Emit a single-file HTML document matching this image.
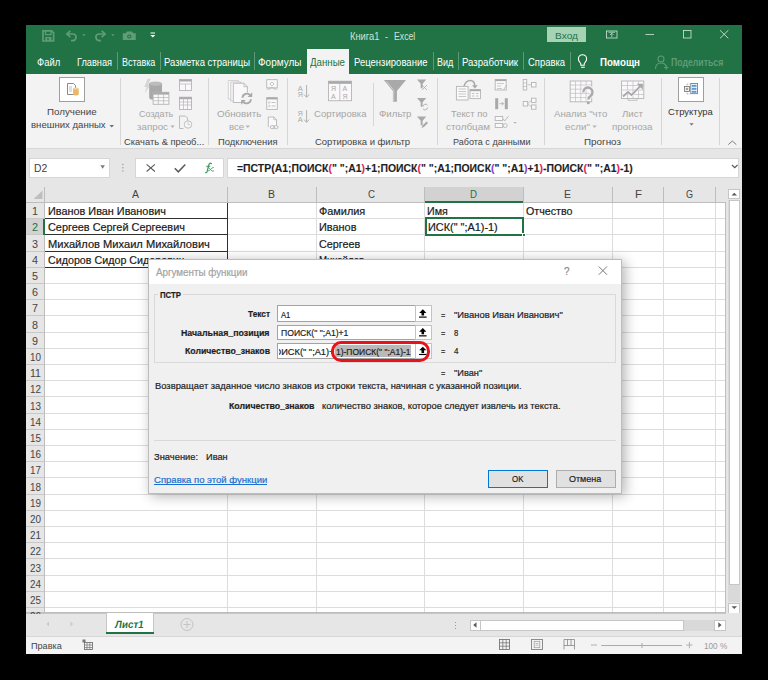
<!DOCTYPE html>
<html><head><meta charset="utf-8"><style>
html,body{margin:0;padding:0;background:#000;width:768px;height:680px;overflow:hidden}
.a{position:absolute;box-sizing:border-box}
.t{position:absolute;white-space:pre;transform-origin:0 0;font-family:"Liberation Sans",sans-serif}
svg{position:absolute;overflow:visible}
</style></head><body>
<div class="a" style="left:26px;top:25px;width:716px;height:629px;background:#e6e6e6;"></div>
<div class="a" style="left:26px;top:25px;width:716px;height:48.5px;background:#217346;"></div>
<div class="a" style="left:547px;top:27px;width:38.5px;height:15px;background:#a7d3b5;"></div>
<svg style="left:0;top:0" width="768" height="680"><rect x="606.5" y="31" width="10.5" height="7" fill="none" stroke="#d5e7db" stroke-width="0.8"/><path d="M611.75 37v-3.5M610 35l1.75-1.75 1.75 1.75M608.5 32.3h6.5" fill="none" stroke="#d5e7db" stroke-width="0.7"/><path d="M645.5 34.5h8.5" stroke="#d5e7db" stroke-width="0.8"/><rect x="683.5" y="30.5" width="7.5" height="7.5" fill="none" stroke="#d5e7db" stroke-width="0.8"/><path d="M720 30.3l8.3 8M728.3 30.3l-8.3 8" stroke="#d5e7db" stroke-width="0.85"/></svg>
<svg style="left:0;top:0" width="768" height="680"><path d="M43 30.8h8.6l2 2v8.2H43z" fill="none" stroke="#5f9c77" stroke-width="1.7"/><path d="M45.5 31v3.6h5.5V31" fill="none" stroke="#5f9c77" stroke-width="1.3"/><rect x="45.3" y="37" width="6.2" height="4" fill="#5f9c77"/><rect x="47.2" y="38.3" width="1.6" height="1.8" fill="#217346"/><path d="M67.3 34h5.5a3.3 3.3 0 0 1 0 6.6h-1.8" fill="none" stroke="#5f9c77" stroke-width="1.7"/><path d="M70.3 30.8l-3.4 3.2 3.4 3.2" fill="none" stroke="#5f9c77" stroke-width="1.7"/><path d="M82.3 34.3h3.2l-1.6 1.9z" fill="#5f9c77"/><path d="M104.7 34h-5.5a3.3 3.3 0 0 0 0 6.6h1.8" fill="none" stroke="#5f9c77" stroke-width="1.7"/><path d="M101.7 30.8l3.4 3.2-3.4 3.2" fill="none" stroke="#5f9c77" stroke-width="1.7"/><path d="M111.3 34.3h3.2l-1.6 1.9z" fill="#5f9c77"/><path d="M122.8 33.2h3l1.2-1.8h5l1.2 1.8h2.6v6.8h-13z" fill="#5f9c77"/><circle cx="129.3" cy="36.5" r="2.1" fill="#217346"/><circle cx="129.3" cy="36.5" r="1.1" fill="#5f9c77"/><path d="M150.5 33h4.5" stroke="#ffffff" stroke-width="1"/><path d="M150.3 35h5l-2.5 2.6z" fill="#ffffff"/></svg>
<div class="a" style="left:307px;top:49px;width:42px;height:24.5px;background:#f3f3f3;"></div>
<div class="a" style="left:117.3px;top:52px;width:1px;height:18px;background:#5c9a74;"></div>
<div class="a" style="left:160px;top:52px;width:1px;height:18px;background:#5c9a74;"></div>
<div class="a" style="left:253.75px;top:52px;width:1px;height:18px;background:#5c9a74;"></div>
<div class="a" style="left:432.5px;top:52px;width:1px;height:18px;background:#5c9a74;"></div>
<div class="a" style="left:457.5px;top:52px;width:1px;height:18px;background:#5c9a74;"></div>
<div class="a" style="left:523px;top:52px;width:1px;height:18px;background:#5c9a74;"></div>
<div class="a" style="left:569.5px;top:52px;width:1px;height:18px;background:#5c9a74;"></div>
<svg style="left:0;top:0" width="768" height="680"><path d="M581 67.3h3.8M580.8 65.2v-1.3c0-1-2.4-2.4-2.4-5a4.1 4.1 0 0 1 8.2 0c0 2.6-2.4 4-2.4 5v1.3z" fill="none" stroke="#fff" stroke-width="1.1"/><circle cx="661" cy="59" r="3" fill="none" stroke="#5e9c76" stroke-width="1.1"/><path d="M655.5 69c0-4 2.5-6 5.5-6s4.5 1.5 5 3M664 67.5h4.5M666.25 65.25v4.5" fill="none" stroke="#5e9c76" stroke-width="1.1"/></svg>
<div class="a" style="left:26px;top:73.5px;width:716px;height:74.5px;background:#f3f3f3;"></div>
<div class="a" style="left:26px;top:147.5px;width:716px;height:1px;background:#d6d6d6;"></div>
<div class="a" style="left:119.9px;top:77.5px;width:1px;height:67px;background:#d6d6d6;"></div>
<div class="a" style="left:207.9px;top:77.5px;width:1px;height:67px;background:#d6d6d6;"></div>
<div class="a" style="left:286.9px;top:77.5px;width:1px;height:67px;background:#d6d6d6;"></div>
<div class="a" style="left:436.9px;top:77.5px;width:1px;height:67px;background:#d6d6d6;"></div>
<div class="a" style="left:543.9px;top:77.5px;width:1px;height:67px;background:#d6d6d6;"></div>
<div class="a" style="left:661.15px;top:77.5px;width:1px;height:67px;background:#d6d6d6;"></div>
<div class="a" style="left:719.4px;top:77.5px;width:1px;height:67px;background:#d6d6d6;"></div>
<div class="a" style="left:372.5px;top:82.5px;width:1px;height:43.5px;background:#d6d6d6;"></div>
<div class="a" style="left:58.75px;top:77px;width:26.25px;height:25px;background:#ffffff;border:1px solid #9f9f9f;box-sizing:border-box;"></div>
<div class="a" style="left:678px;top:77px;width:25.75px;height:24.75px;background:#ffffff;border:1px solid #9f9f9f;box-sizing:border-box;"></div>
<div class="a" style="left:28.75px;top:157.5px;width:81.5px;height:20px;background:#ffffff;border:1px solid #d6d6d6;box-sizing:border-box;"></div>
<div class="a" style="left:135.3px;top:157.7px;width:88.6px;height:20px;background:#ffffff;border:1px solid #d6d6d6;box-sizing:border-box;"></div>
<div class="a" style="left:227px;top:157.5px;width:511.5px;height:20px;background:#ffffff;border:1px solid #d6d6d6;box-sizing:border-box;"></div>
<svg style="left:0;top:0" width="768" height="680"><path d="M100.4 165.3h4.5l-2.25 3.5z" fill="#7a7a7a"/><circle cx="122.9" cy="164.5" r="0.7" fill="#9a9a9a"/><circle cx="122.9" cy="167.75" r="0.7" fill="#9a9a9a"/><circle cx="122.9" cy="171" r="0.7" fill="#9a9a9a"/><path d="M146.6 164.3l8.3 7.2M154.9 164.3l-8.3 7.2" stroke="#5a5a5a" stroke-width="1.1"/><path d="M174.8 168.3l3.5 3.5 7-7.4" fill="none" stroke="#5a5a5a" stroke-width="1.5"/><path d="M732 165l2.75 2.75 2.75-2.75" fill="none" stroke="#5a5a5a" stroke-width="1.2"/></svg>
<svg style="left:0;top:0" width="768" height="680"><path d="M211.5 163.6q-1.2-1-2.2.2-.6.8-1.2 3.6l-1 4.2q-.4 1.4-1.6 1.1" fill="none" stroke="#3c9a62" stroke-width="1.2" stroke-linecap="round"/><path d="M206.6 166.3h3.3M208.3 167.6q1 .3 2 1.6l1.5 1.6q.6.5 1.6.2M213.2 167.5q-.8 0-1.6.9l-1.6 1.6q-.5.7-1.4.7" fill="none" stroke="#3c9a62" stroke-width="1" stroke-linecap="round"/></svg>
<div class="a" style="left:44.5px;top:202.5px;width:681.0px;height:410.5px;background:#ffffff;"></div>
<div class="a" style="left:45px;top:218.2px;width:680.5px;height:1px;background:#dcdcdc;"></div>
<div class="a" style="left:26px;top:218.2px;width:18.5px;height:1px;background:#c8c8c8;"></div>
<div class="a" style="left:45px;top:234.4px;width:680.5px;height:1px;background:#dcdcdc;"></div>
<div class="a" style="left:26px;top:234.4px;width:18.5px;height:1px;background:#c8c8c8;"></div>
<div class="a" style="left:45px;top:250.6px;width:680.5px;height:1px;background:#dcdcdc;"></div>
<div class="a" style="left:26px;top:250.6px;width:18.5px;height:1px;background:#c8c8c8;"></div>
<div class="a" style="left:45px;top:266.8px;width:680.5px;height:1px;background:#dcdcdc;"></div>
<div class="a" style="left:26px;top:266.8px;width:18.5px;height:1px;background:#c8c8c8;"></div>
<div class="a" style="left:45px;top:283.0px;width:680.5px;height:1px;background:#dcdcdc;"></div>
<div class="a" style="left:26px;top:283.0px;width:18.5px;height:1px;background:#c8c8c8;"></div>
<div class="a" style="left:45px;top:299.2px;width:680.5px;height:1px;background:#dcdcdc;"></div>
<div class="a" style="left:26px;top:299.2px;width:18.5px;height:1px;background:#c8c8c8;"></div>
<div class="a" style="left:45px;top:315.4px;width:680.5px;height:1px;background:#dcdcdc;"></div>
<div class="a" style="left:26px;top:315.4px;width:18.5px;height:1px;background:#c8c8c8;"></div>
<div class="a" style="left:45px;top:331.6px;width:680.5px;height:1px;background:#dcdcdc;"></div>
<div class="a" style="left:26px;top:331.6px;width:18.5px;height:1px;background:#c8c8c8;"></div>
<div class="a" style="left:45px;top:347.79999999999995px;width:680.5px;height:1px;background:#dcdcdc;"></div>
<div class="a" style="left:26px;top:347.79999999999995px;width:18.5px;height:1px;background:#c8c8c8;"></div>
<div class="a" style="left:45px;top:364.0px;width:680.5px;height:1px;background:#dcdcdc;"></div>
<div class="a" style="left:26px;top:364.0px;width:18.5px;height:1px;background:#c8c8c8;"></div>
<div class="a" style="left:45px;top:380.2px;width:680.5px;height:1px;background:#dcdcdc;"></div>
<div class="a" style="left:26px;top:380.2px;width:18.5px;height:1px;background:#c8c8c8;"></div>
<div class="a" style="left:45px;top:396.4px;width:680.5px;height:1px;background:#dcdcdc;"></div>
<div class="a" style="left:26px;top:396.4px;width:18.5px;height:1px;background:#c8c8c8;"></div>
<div class="a" style="left:45px;top:412.6px;width:680.5px;height:1px;background:#dcdcdc;"></div>
<div class="a" style="left:26px;top:412.6px;width:18.5px;height:1px;background:#c8c8c8;"></div>
<div class="a" style="left:45px;top:428.79999999999995px;width:680.5px;height:1px;background:#dcdcdc;"></div>
<div class="a" style="left:26px;top:428.79999999999995px;width:18.5px;height:1px;background:#c8c8c8;"></div>
<div class="a" style="left:45px;top:445.0px;width:680.5px;height:1px;background:#dcdcdc;"></div>
<div class="a" style="left:26px;top:445.0px;width:18.5px;height:1px;background:#c8c8c8;"></div>
<div class="a" style="left:45px;top:461.2px;width:680.5px;height:1px;background:#dcdcdc;"></div>
<div class="a" style="left:26px;top:461.2px;width:18.5px;height:1px;background:#c8c8c8;"></div>
<div class="a" style="left:45px;top:477.4px;width:680.5px;height:1px;background:#dcdcdc;"></div>
<div class="a" style="left:26px;top:477.4px;width:18.5px;height:1px;background:#c8c8c8;"></div>
<div class="a" style="left:45px;top:493.59999999999997px;width:680.5px;height:1px;background:#dcdcdc;"></div>
<div class="a" style="left:26px;top:493.59999999999997px;width:18.5px;height:1px;background:#c8c8c8;"></div>
<div class="a" style="left:45px;top:509.8px;width:680.5px;height:1px;background:#dcdcdc;"></div>
<div class="a" style="left:26px;top:509.8px;width:18.5px;height:1px;background:#c8c8c8;"></div>
<div class="a" style="left:45px;top:526.0px;width:680.5px;height:1px;background:#dcdcdc;"></div>
<div class="a" style="left:26px;top:526.0px;width:18.5px;height:1px;background:#c8c8c8;"></div>
<div class="a" style="left:45px;top:542.2px;width:680.5px;height:1px;background:#dcdcdc;"></div>
<div class="a" style="left:26px;top:542.2px;width:18.5px;height:1px;background:#c8c8c8;"></div>
<div class="a" style="left:45px;top:558.4px;width:680.5px;height:1px;background:#dcdcdc;"></div>
<div class="a" style="left:26px;top:558.4px;width:18.5px;height:1px;background:#c8c8c8;"></div>
<div class="a" style="left:45px;top:574.5999999999999px;width:680.5px;height:1px;background:#dcdcdc;"></div>
<div class="a" style="left:26px;top:574.5999999999999px;width:18.5px;height:1px;background:#c8c8c8;"></div>
<div class="a" style="left:45px;top:590.8px;width:680.5px;height:1px;background:#dcdcdc;"></div>
<div class="a" style="left:26px;top:590.8px;width:18.5px;height:1px;background:#c8c8c8;"></div>
<div class="a" style="left:45px;top:607.0px;width:680.5px;height:1px;background:#dcdcdc;"></div>
<div class="a" style="left:26px;top:607.0px;width:18.5px;height:1px;background:#c8c8c8;"></div>
<div class="a" style="left:227.0px;top:202.5px;width:1px;height:410.5px;background:#dcdcdc;"></div>
<div class="a" style="left:227.0px;top:186.5px;width:1px;height:16px;background:#bdbdbd;"></div>
<div class="a" style="left:315.75px;top:202.5px;width:1px;height:410.5px;background:#dcdcdc;"></div>
<div class="a" style="left:315.75px;top:186.5px;width:1px;height:16px;background:#bdbdbd;"></div>
<div class="a" style="left:424.0px;top:202.5px;width:1px;height:410.5px;background:#dcdcdc;"></div>
<div class="a" style="left:424.0px;top:186.5px;width:1px;height:16px;background:#bdbdbd;"></div>
<div class="a" style="left:522.5px;top:202.5px;width:1px;height:410.5px;background:#dcdcdc;"></div>
<div class="a" style="left:522.5px;top:186.5px;width:1px;height:16px;background:#bdbdbd;"></div>
<div class="a" style="left:612.0px;top:202.5px;width:1px;height:410.5px;background:#dcdcdc;"></div>
<div class="a" style="left:612.0px;top:186.5px;width:1px;height:16px;background:#bdbdbd;"></div>
<div class="a" style="left:663.25px;top:202.5px;width:1px;height:410.5px;background:#dcdcdc;"></div>
<div class="a" style="left:663.25px;top:186.5px;width:1px;height:16px;background:#bdbdbd;"></div>
<div class="a" style="left:715.0px;top:202.5px;width:1px;height:410.5px;background:#dcdcdc;"></div>
<div class="a" style="left:715.0px;top:186.5px;width:1px;height:16px;background:#bdbdbd;"></div>
<div class="a" style="left:26px;top:201.5px;width:699.5px;height:1px;background:#bdbdbd;"></div>
<div class="a" style="left:44px;top:186.5px;width:1px;height:426.5px;background:#bdbdbd;"></div>
<div class="a" style="left:724.5px;top:202.5px;width:1px;height:410.5px;background:#bdbdbd;"></div>
<div class="a" style="left:26px;top:612px;width:699.5px;height:1px;background:#bdbdbd;"></div>
<div class="a" style="left:425px;top:186.5px;width:98px;height:15px;background:#d2d2d2;"></div>
<div class="a" style="left:425px;top:200.5px;width:98px;height:2px;background:#217346;"></div>
<div class="a" style="left:26px;top:218.7px;width:18px;height:15.7px;background:#d2d2d2;"></div>
<div class="a" style="left:43px;top:218.7px;width:2px;height:16.2px;background:#217346;"></div>
<svg style="left:0;top:0" width="768" height="680"><path d="M42.5 190.5v8.5h-9z" fill="#bfbfbf"/></svg>
<div class="a" style="left:44.5px;top:218.2px;width:183.5px;height:1px;background:#303030;"></div>
<div class="a" style="left:44.5px;top:234.4px;width:183.5px;height:1px;background:#303030;"></div>
<div class="a" style="left:44.5px;top:250.6px;width:183.5px;height:1px;background:#303030;"></div>
<div class="a" style="left:44.5px;top:266.8px;width:183.5px;height:1px;background:#303030;"></div>
<div class="a" style="left:227px;top:202.5px;width:1px;height:64.8px;background:#303030;"></div>
<div class="a" style="left:424.5px;top:217px;width:99.5px;height:18.5px;border:2px solid #217346;box-sizing:border-box;"></div>
<div class="a" style="left:521.5px;top:233px;width:4px;height:4px;background:#217346;border:1px solid #fff;"></div>
<div class="a" style="left:725.5px;top:186.5px;width:16.5px;height:427px;background:#e6e6e6;"></div>
<div class="a" style="left:728.3px;top:188.6px;width:11.8px;height:10.7px;background:#ffffff;border:1px solid #c6c6c6;box-sizing:border-box;"></div>
<div class="a" style="left:728.3px;top:200.3px;width:11.8px;height:402px;background:#d9d9d9;"></div>
<div class="a" style="left:728.8px;top:200.3px;width:11.3px;height:384.7px;background:#ffffff;border:1px solid #c6c6c6;box-sizing:border-box;"></div>
<div class="a" style="left:728.3px;top:602.5px;width:11.8px;height:11px;background:#ffffff;border:1px solid #c6c6c6;box-sizing:border-box;"></div>
<svg style="left:0;top:0" width="768" height="680"><path d="M731.5 195.5h5.5l-2.75-2.8z" fill="#595959"/><path d="M731.5 606.3h5.5l-2.75 2.8z" fill="#595959"/></svg>
<div class="a" style="left:26px;top:613px;width:716px;height:23.25px;background:#e6e6e6;"></div>
<div class="a" style="left:26px;top:613px;width:700px;height:1px;background:#c6c6c6;"></div>
<div class="a" style="left:105.5px;top:613px;width:48.25px;height:21px;background:#ffffff;border-left:1px solid #c6c6c6;border-right:1px solid #c6c6c6;"></div>
<div class="a" style="left:105.5px;top:631.5px;width:48.25px;height:2px;background:#217346;"></div>
<div class="a" style="left:455.25px;top:621.5px;width:1px;height:1.2px;background:#9a9a9a;"></div>
<div class="a" style="left:455.25px;top:624.5px;width:1px;height:1.2px;background:#9a9a9a;"></div>
<div class="a" style="left:455.25px;top:627.5px;width:1px;height:1.2px;background:#9a9a9a;"></div>
<div class="a" style="left:469.5px;top:619.5px;width:256px;height:11.75px;background:#d9d9d9;"></div>
<div class="a" style="left:469.5px;top:619.5px;width:214.75px;height:11.75px;background:#ffffff;border:1px solid #c6c6c6;box-sizing:border-box;"></div>
<div class="a" style="left:469.5px;top:619.5px;width:11.5px;height:11.75px;background:#ffffff;border:1px solid #c6c6c6;box-sizing:border-box;"></div>
<div class="a" style="left:713.75px;top:619.5px;width:11.75px;height:11.75px;background:#ffffff;border:1px solid #c6c6c6;box-sizing:border-box;"></div>
<svg style="left:0;top:0" width="768" height="680"><path d="M49 621.5l-2.5 2.5 2.5 2.5z" fill="#c8c8c8"/><path d="M70.5 621.5l2.5 2.5-2.5 2.5z" fill="#c8c8c8"/><circle cx="187" cy="624.5" r="6" fill="none" stroke="#c4c4c4" stroke-width="1"/><path d="M183.5 624.5h7M187 621v7" stroke="#c4c4c4" stroke-width="1"/><path d="M476.5 622.3v5.4l-3.3-2.7z" fill="#595959"/><path d="M718.3 622.3v5.4l3.3-2.7z" fill="#595959"/></svg>
<div class="a" style="left:26px;top:636.25px;width:716px;height:17.75px;background:#f3f3f3;"></div>
<div class="a" style="left:26px;top:636.25px;width:716px;height:1px;background:#d6d6d6;"></div>
<svg style="left:0;top:0" width="768" height="680"><rect x="82.5" y="639.5" width="3" height="3" fill="#777"/><rect x="84.5" y="642.5" width="8" height="7" fill="none" stroke="#777" stroke-width="0.9"/><path d="M84.5 645h8M84.5 647.5h8M87 642.5v7M89.8 642.5v7" stroke="#777" stroke-width="0.7"/><rect x="499.5" y="639.5" width="10" height="10" fill="none" stroke="#777" stroke-width="0.9"/><path d="M499.5 642.8h10M499.5 646.2h10M502.8 639.5v10M506.2 639.5v10" stroke="#777" stroke-width="0.8"/><rect x="531.5" y="639.5" width="11" height="10" fill="none" stroke="#808080" stroke-width="0.9"/><rect x="534.2" y="641.3" width="5.6" height="6.4" fill="none" stroke="#9a9a9a" stroke-width="0.7"/><path d="M535.5 643.5h3M535.5 645.2h3" stroke="#9a9a9a" stroke-width="0.6"/><path d="M564 649.5v-10h10.5v10M564 645.5h10.5M567.5 639.5v6M571 639.5v6" fill="none" stroke="#808080" stroke-width="0.75"/><path d="M591 645h6" stroke="#b0b0b0" stroke-width="1"/><path d="M601.25 645.5h80.75" stroke="#aaa" stroke-width="1"/><path d="M642 643v5" stroke="#aaa" stroke-width="1"/><path d="M686.25 645h6.25M689.4 642v6.25" stroke="#b0b0b0" stroke-width="1"/></svg>
<div class="a" style="left:148px;top:258.8px;width:473.5px;height:235.2px;background:#f0f0f0;border:1px solid #bcbcbc;box-shadow:3px 2px 12px rgba(0,0,0,0.3);z-index:20"></div>
<div class="a" style="left:149px;top:259.8px;width:471.5px;height:24px;background:#ffffff;z-index:20;"></div>
<svg style="left:0;top:0;z-index:21" width="768" height="680"><path d="M598.75 266.5l8.25 8.25M607 266.5l-8.25 8.25" stroke="#7a7a7a" stroke-width="1"/></svg>
<div class="a" style="left:154.4px;top:294px;width:461.5px;height:69px;border:1px solid #d9d9d9;box-sizing:border-box;z-index:20;"></div>
<div class="a" style="left:158px;top:290px;width:25px;height:8px;background:#f0f0f0;z-index:20;"></div>
<div class="a" style="left:277.25px;top:305.4px;width:154.5px;height:16.200000000000045px;background:#ffffff;border:1px solid #a3a3a3;box-sizing:border-box;z-index:20;"></div>
<div class="a" style="left:415px;top:305.4px;width:16.75px;height:16.200000000000045px;background:#ffffff;border:1.5px solid #c3c3c3;box-sizing:border-box;z-index:20;"></div>
<svg style="left:0;top:0;z-index:21" width="768" height="680"><path d="M422.8 309.30l-3.6 3.6h2.3v2.6h2.6v-2.6h2.3z" fill="#000"/><path d="M419 317.10h7.6" stroke="#000" stroke-width="1.2"/></svg>
<div class="a" style="left:277.25px;top:324.5px;width:154.5px;height:15.5px;background:#ffffff;border:1px solid #a3a3a3;box-sizing:border-box;z-index:20;"></div>
<div class="a" style="left:415px;top:324.5px;width:16.75px;height:15.5px;background:#ffffff;border:1.5px solid #c3c3c3;box-sizing:border-box;z-index:20;"></div>
<svg style="left:0;top:0;z-index:21" width="768" height="680"><path d="M422.8 328.05l-3.6 3.6h2.3v2.6h2.6v-2.6h2.3z" fill="#000"/><path d="M419 335.85h7.6" stroke="#000" stroke-width="1.2"/></svg>
<div class="a" style="left:277.25px;top:343.25px;width:154.5px;height:15.25px;background:#ffffff;border:1px solid #a3a3a3;box-sizing:border-box;z-index:20;"></div>
<div class="a" style="left:415px;top:343.25px;width:16.75px;height:15.25px;background:#ffffff;border:1.5px solid #c3c3c3;box-sizing:border-box;z-index:20;"></div>
<svg style="left:0;top:0;z-index:21" width="768" height="680"><path d="M422.8 346.68l-3.6 3.6h2.3v2.6h2.6v-2.6h2.3z" fill="#000"/><path d="M419 354.48h7.6" stroke="#000" stroke-width="1.2"/></svg>
<div class="a" style="left:335px;top:345.2px;width:76px;height:11.6px;background:#b9b9b9;z-index:20;"></div>
<div class="a" style="left:331.2px;top:340.8px;width:98.8px;height:20.8px;border:3.6px solid #e8121a;border-radius:10px;z-index:22"></div>
<div class="a" style="left:153.7px;top:439.5px;width:462px;height:1px;background:#d9d9d9;z-index:20;"></div>
<div class="a" style="left:154.2px;top:483.6px;width:113.3px;height:1px;background:#1a6fd0;z-index:20;"></div>
<div class="a" style="left:487.8px;top:470.1px;width:59.9px;height:17.8px;background:#e1e1e1;border:1.6px solid #0078d7;box-sizing:border-box;z-index:20;"></div>
<div class="a" style="left:555.9px;top:470.2px;width:59.9px;height:17.6px;background:#e1e1e1;border:1px solid #adadad;box-sizing:border-box;z-index:20;"></div>
<svg style="left:0;top:0" width="768" height="680"><path d="M67.5 83.5h6l2 2v9h-8z" fill="#fff" stroke="#6d6d6d" stroke-width="0.8"/><path d="M69 87h3M69 89h3M69 91h3" stroke="#b0b0b0" stroke-width="0.8"/><path d="M73.1 88.5v6a2.8 1.1 0 0 0 5.6 0v-6z" fill="#e9b765"/><ellipse cx="75.9" cy="88.5" rx="2.8" ry="1" fill="#f3d39a"/><path d="M147.5 78.7h3.4l-2.6 5.5h2.5l-6 9.4 1.8-6.6h-2.4z" fill="#d6d6d6"/><path d="M149.2 84v14a6.4 2 0 0 0 12.8 0V84z" fill="#a9a9a9"/><ellipse cx="155.6" cy="84" rx="6.4" ry="2" fill="#bdbdbd" stroke="#a9a9a9" stroke-width="0.6"/><rect x="153.1" y="92.3" width="15.8" height="12" fill="#faf8fa" stroke="#b5b5b5" stroke-width="0.9"/><rect x="153.1" y="92.3" width="15.8" height="2.3" fill="#a9a9a9"/><path d="M153.1 97.5h15.8M153.1 100.8h15.8M158.3 94.6v9.7M163.6 94.6v9.7" stroke="#b5b5b5" stroke-width="0.7"/><rect x="179.5" y="79.5" width="12" height="11" fill="#faf8fa" stroke="#b5b5b5" stroke-width="0.9"/><rect x="179.5" y="79.5" width="12" height="2" fill="#a9a9a9"/><path d="M179.5 84h12M185.5 84v6.5" stroke="#b5b5b5" stroke-width="0.7"/><rect x="179.5" y="97.2" width="12" height="12.3" fill="#faf8fa" stroke="#b5b5b5" stroke-width="0.9"/><rect x="179.5" y="97.2" width="12" height="2" fill="#a9a9a9"/><path d="M179.5 102h12M179.5 105h12M183.5 97.2v12.3M187.5 97.2v12.3" stroke="#b5b5b5" stroke-width="0.7"/><path d="M179.5 116h6l2 2v5M183.5 128.5h-4v-12.5" fill="none" stroke="#b5b5b5" stroke-width="0.9"/><circle cx="188" cy="124.5" r="3.7" fill="#faf8fa" stroke="#b5b5b5" stroke-width="0.9"/><path d="M188 122.2v2.5h2" fill="none" stroke="#b5b5b5" stroke-width="0.7"/><path d="M228.3 80.5h10v18.5h-10z" fill="#faf8fa" stroke="#c9c9c9" stroke-width="0.8"/><path d="M230.8 82h10v19h-10z" fill="#faf8fa" stroke="#c3c3c3" stroke-width="0.8"/><path d="M233.3 83.2h10.6l3.5 3.5v15.8h-14.1z" fill="#faf8fa" stroke="#b5b5b5" stroke-width="0.9"/><path d="M243.9 83.2v3.5h3.5" fill="none" stroke="#b5b5b5" stroke-width="0.8"/><circle cx="246.7" cy="98.5" r="6.3" fill="#f3f3f3"/><path d="M242.5 97.8a4.3 4.3 0 0 1 7.6-2.6M250.9 99.2a4.3 4.3 0 0 1-7.6 2.6" fill="none" stroke="#a9a9a9" stroke-width="1.8"/><path d="M252.2 92.3v4.6h-4.6zM241.2 104.7v-4.6h4.6z" fill="#a9a9a9"/><path d="M266.7 79.6h10.6v8.2h-10.6z" fill="#faf8fa" stroke="#b5b5b5" stroke-width="0.9"/><path d="M272 81.9l2.1 2.1-2.1 2.1-2.1-2.1z" fill="none" stroke="#b5b5b5" stroke-width="0.8"/><path d="M266.7 89h3.2l1.2-1.2h1.8l1.2 1.2h3.2" fill="none" stroke="#b5b5b5" stroke-width="0.9"/><rect x="266.7" y="97.6" width="10.6" height="11.8" fill="#faf8fa" stroke="#b5b5b5" stroke-width="0.9"/><rect x="266.7" y="97.6" width="10.6" height="1.8" fill="#a9a9a9"/><circle cx="269.3" cy="102.5" r="0.8" fill="none" stroke="#b5b5b5" stroke-width="0.6"/><circle cx="269.3" cy="106" r="0.8" fill="none" stroke="#b5b5b5" stroke-width="0.6"/><path d="M271.5 102.5h4M271.5 106h4" stroke="#b5b5b5" stroke-width="0.8"/><path d="M268.3 127v-10h5.5l2.7 2.7v5.5" fill="#faf8fa" stroke="#b5b5b5" stroke-width="0.9"/><path d="M273.8 117v2.7h2.7" fill="none" stroke="#b5b5b5" stroke-width="0.7"/><rect x="270.3" y="125.6" width="4.2" height="3" rx="1.5" fill="none" stroke="#b5b5b5" stroke-width="0.9"/><rect x="273.8" y="125.6" width="4.2" height="3" rx="1.5" fill="none" stroke="#b5b5b5" stroke-width="0.9"/><text x="297.8" y="91.2" font-family="Liberation Sans" font-size="7.5" fill="#a9a9a9">A</text><text x="297.8" y="97.4" font-family="Liberation Sans" font-size="7" fill="#a9a9a9">Я</text><path d="M306.6 85v12M304 94.5l2.6 2.8 2.6-2.8" fill="none" stroke="#a9a9a9" stroke-width="0.9"/><text x="297.8" y="116" font-family="Liberation Sans" font-size="7" fill="#a9a9a9">Я</text><text x="297.8" y="122.4" font-family="Liberation Sans" font-size="7.5" fill="#a9a9a9">A</text><path d="M306.6 110v12.3M304 119.5l2.6 2.8 2.6-2.8" fill="none" stroke="#a9a9a9" stroke-width="0.9"/><rect x="328.5" y="81.2" width="23" height="19.5" fill="#faf8fa" stroke="#b5b5b5" stroke-width="0.9"/><rect x="328.5" y="81.2" width="23" height="2.6" fill="#a9a9a9"/><path d="M339.8 83.8v17" stroke="#b5b5b5" stroke-width="0.8"/><text x="331" y="91" font-family="Liberation Sans" font-size="7" fill="#a9a9a9">Я</text><text x="331" y="99" font-family="Liberation Sans" font-size="7" fill="#a9a9a9">A</text><text x="342.5" y="91" font-family="Liberation Sans" font-size="7" fill="#a9a9a9">A</text><text x="342.5" y="99" font-family="Liberation Sans" font-size="7" fill="#a9a9a9">Я</text><path d="M383.9 80.1h22.1l-9.1 10.9v10.7h-4V91z" fill="#a9a9a9"/><path d="M386.5 81.5l7.2 8.8v11" fill="none" stroke="#e0e0e0" stroke-width="0.7"/><path d="M417 79.5h9.3l-3.7 4.2v4.5h-1.9v-4.5z" fill="#a9a9a9"/><path d="M422 85l5 5M427 85l-5 5" stroke="#a9a9a9" stroke-width="0.8"/><path d="M417 98h9.3l-3.7 4.2v4.5h-1.9v-4.5z" fill="#a9a9a9"/><path d="M423 106.5a2.6 2.6 0 0 1 4.5-1.5M427.6 107.5a2.6 2.6 0 0 1-4.5 1.5" fill="none" stroke="#a9a9a9" stroke-width="0.9"/><path d="M417 116.5h9.3l-3.7 4.2v4.5h-1.9v-4.5z" fill="#a9a9a9"/><path d="M421.5 128l1-2.5 4-4 1.5 1.5-4 4z" fill="#a9a9a9"/><path d="M464 86q1.8-5.6 6.3-5.6 4.2 0 4.6 5.5" fill="none" stroke="#a9a9a9" stroke-width="1.5"/><path d="M472 85.3l2.9 3.2 2.9-3.2z" fill="#a9a9a9"/><rect x="456.4" y="86.4" width="11.7" height="13.6" fill="#faf8fa" stroke="#b5b5b5" stroke-width="0.9"/><path d="M458.5 89h7.5M458.5 91.5h7.5M458.5 94h7.5M458.5 96.5h7.5" stroke="#b5b5b5" stroke-width="0.7"/><rect x="470" y="89.6" width="10.5" height="9" fill="#faf8fa" stroke="#b5b5b5" stroke-width="0.9"/><rect x="470" y="89.6" width="10.5" height="1.6" fill="#a9a9a9"/><path d="M472 93.5h2.5M476 93.5h2.5M472 96h2.5M476 96h2.5" stroke="#b5b5b5" stroke-width="0.8"/><rect x="495.2" y="79.5" width="11" height="10.5" fill="#faf8fa" stroke="#b5b5b5" stroke-width="0.9"/><rect x="495.2" y="79.5" width="11" height="1.6" fill="#a9a9a9"/><path d="M497 83.5h7M497 86h4M497 88.5h5" stroke="#b5b5b5" stroke-width="0.7"/><path d="M503.5 90l3-5" stroke="#b5b5b5" stroke-width="0.8"/><rect x="495.2" y="98.2" width="3" height="11" fill="#a9a9a9"/><rect x="504.8" y="98.2" width="3" height="11" fill="#a9a9a9"/><path d="M499.5 103.7h4M502 102l1.5 1.7-1.5 1.7" fill="none" stroke="#a9a9a9" stroke-width="0.8"/><rect x="495.2" y="116.5" width="7.5" height="4" fill="#faf8fa" stroke="#b5b5b5" stroke-width="0.9"/><rect x="495.2" y="123.5" width="7.5" height="4" fill="#faf8fa" stroke="#b5b5b5" stroke-width="0.9"/><path d="M503 119l2 1.8 3.5-4.8" fill="none" stroke="#b5b5b5" stroke-width="0.9"/><circle cx="505.2" cy="125.6" r="2" fill="none" stroke="#b5b5b5" stroke-width="0.8"/><path d="M513.3 122h3.5l-1.75 1.8z" fill="#b5b5b5"/><rect x="523.2" y="79.5" width="3.5" height="10.5" fill="#faf8fa" stroke="#b5b5b5" stroke-width="0.9"/><path d="M523.2 83h3.5M523.2 86.5h3.5M527.5 84.7h3.5" stroke="#b5b5b5" stroke-width="0.7"/><rect x="531.5" y="82.5" width="4.5" height="4.5" fill="#faf8fa" stroke="#b5b5b5" stroke-width="0.9"/><rect x="523.2" y="101.5" width="4.5" height="4.5" fill="#faf8fa" stroke="#b5b5b5" stroke-width="0.9"/><rect x="531.5" y="98.2" width="4.5" height="4.2" fill="#faf8fa" stroke="#b5b5b5" stroke-width="0.9"/><rect x="531.5" y="105" width="4.5" height="4.2" fill="#faf8fa" stroke="#b5b5b5" stroke-width="0.9"/><path d="M527.7 103.7l3.8-3.5M527.7 103.7l3.8 3.5" stroke="#b5b5b5" stroke-width="0.7"/><rect x="570.2" y="81" width="21.5" height="20.8" fill="#faf8fa" stroke="#b5b5b5" stroke-width="0.9"/><path d="M570.2 85h21.5M570.2 89.2h21.5M570.2 93.4h21.5M570.2 97.6h21.5M575.5 81v20.8M580.8 81v20.8M586.1 81v20.8" stroke="#b5b5b5" stroke-width="0.6"/><path d="M583.3 92.3a4.6 4.6 0 1 1 7.2 3.6c-1.6 1-2.2 1.9-2.2 3.6" fill="none" stroke="#f3f3f3" stroke-width="4.4"/><path d="M583.3 92.3a4.6 4.6 0 1 1 7.2 3.6c-1.6 1-2.2 1.9-2.2 3.6" fill="none" stroke="#a9a9a9" stroke-width="2.4"/><circle cx="588.3" cy="102.7" r="1.5" fill="#a9a9a9"/><rect x="621.5" y="81" width="22.3" height="17.5" fill="#faf8fa" stroke="#b5b5b5" stroke-width="0.9"/><path d="M621.5 85.5h22.3M621.5 90h22.3M621.5 94.5h22.3M627.5 81v17.5M633 81v17.5M638.5 81v17.5" stroke="#b5b5b5" stroke-width="0.6"/><path d="M623 96.5l5-4.5 3.5 3 9.5-9.5" fill="none" stroke="#faf8fa" stroke-width="3"/><path d="M623 96.5l5-4.5 3.5 3 9.5-9.5" fill="none" stroke="#a9a9a9" stroke-width="1.8"/><path d="M636.8 83.8h6v6z" fill="#a9a9a9"/><path d="M628 98.5v1.8h9v-1.8" fill="none" stroke="#b5b5b5" stroke-width="0.8"/><rect x="684.5" y="86.5" width="5" height="5" fill="#f2f2f2" stroke="#707070" stroke-width="0.8"/><path d="M685.8 89h2.4M687 87.8v2.4" stroke="#555" stroke-width="0.6"/><path d="M687 84v2.5M687 91.5v2.5M687 84h3M687 94h3" stroke="#909090" stroke-width="0.6" stroke-dasharray="1 0.6"/><rect x="690.8" y="83.5" width="6.7" height="10.2" fill="#fff" stroke="#707070" stroke-width="0.8"/><rect x="691.8" y="84.8" width="4.7" height="2" fill="#5b9bd5"/><rect x="691.8" y="87.8" width="4.7" height="2" fill="#5b9bd5"/><rect x="691.8" y="90.8" width="4.7" height="2" fill="#5b9bd5"/><path d="M689.5 123.2h4.1l-2.05 2.4z" fill="#6d6d6d"/><path d="M728.3 144.6l4-3.6 4 3.6" fill="none" stroke="#6d6d6d" stroke-width="0.9"/><path d="M109.5 125h4.5l-2.25 2.4z" fill="#6d6d6d"/><path d="M170.3 125.5h4.5l-2.25 2.4z" fill="#b5b5b5"/><path d="M245.5 125.5h4.5l-2.25 2.4z" fill="#b5b5b5"/><path d="M592.3 125.5h4.5l-2.25 2.4z" fill="#b5b5b5"/></svg>
<div class="t" style="left:350px;top:30.60px;font-size:10px;line-height:11.17px;color:#cfe2d6;font-weight:400;transform:scaleX(0.9338);">Книга1</div>
<div class="t" style="left:385.4px;top:30.60px;font-size:10px;line-height:11.17px;color:#cfe2d6;font-weight:400;transform:scaleX(0.8673);">-</div>
<div class="t" style="left:394px;top:30.60px;font-size:10px;line-height:11.17px;color:#cfe2d6;font-weight:400;transform:scaleX(0.8690);">Excel</div>
<div class="t" style="left:555px;top:30.80px;font-size:9.5px;line-height:10.61px;color:#217346;font-weight:400;transform:scaleX(1.0698);">Вход</div>
<div class="t" style="left:36.6px;top:56.60px;font-size:10px;line-height:11.17px;color:#ffffff;font-weight:400;transform:scaleX(0.9413);">Файл</div>
<div class="t" style="left:77px;top:56.60px;font-size:10px;line-height:11.17px;color:#ffffff;font-weight:400;transform:scaleX(0.9195);">Главная</div>
<div class="t" style="left:121.9px;top:56.60px;font-size:10px;line-height:11.17px;color:#ffffff;font-weight:400;transform:scaleX(0.8958);">Вставка</div>
<div class="t" style="left:164px;top:56.60px;font-size:10px;line-height:11.17px;color:#ffffff;font-weight:400;transform:scaleX(0.9480);">Разметка страницы</div>
<div class="t" style="left:257.5px;top:56.60px;font-size:10px;line-height:11.17px;color:#ffffff;font-weight:400;transform:scaleX(0.9996);">Формулы</div>
<div class="t" style="left:310px;top:56.60px;font-size:10px;line-height:11.17px;color:#217346;font-weight:400;transform:scaleX(0.9684);">Данные</div>
<div class="t" style="left:354px;top:56.60px;font-size:10px;line-height:11.17px;color:#ffffff;font-weight:400;transform:scaleX(0.9518);">Рецензирование</div>
<div class="t" style="left:436.75px;top:56.60px;font-size:10px;line-height:11.17px;color:#ffffff;font-weight:400;transform:scaleX(0.8981);">Вид</div>
<div class="t" style="left:462px;top:56.60px;font-size:10px;line-height:11.17px;color:#ffffff;font-weight:400;transform:scaleX(0.9601);">Разработчик</div>
<div class="t" style="left:527.5px;top:56.60px;font-size:10px;line-height:11.17px;color:#ffffff;font-weight:400;transform:scaleX(0.9431);">Справка</div>
<div class="t" style="left:599.5px;top:56.60px;font-size:10px;line-height:11.17px;color:#ffffff;font-weight:700;transform:scaleX(0.9752);">Помощн</div>
<div class="t" style="left:670.75px;top:56.60px;font-size:10px;line-height:11.17px;color:#5e9c76;font-weight:700;transform:scaleX(0.8706);">Поделиться</div>
<div class="t" style="left:47.4px;top:107.30px;font-size:9.5px;line-height:10.61px;color:#444444;font-weight:400;transform:scaleX(1.0276);">Получение</div>
<div class="t" style="left:31.1px;top:119.80px;font-size:9.5px;line-height:10.61px;color:#444444;font-weight:400;transform:scaleX(1.0081);">внешних данных</div>
<div class="t" style="left:123.75px;top:137.20px;font-size:9.5px;line-height:10.61px;color:#444444;font-weight:400;transform:scaleX(0.9833);">Скачать &amp; преоб...</div>
<div class="t" style="left:138.75px;top:108.70px;font-size:9.5px;line-height:10.61px;color:#a6a6a6;font-weight:400;transform:scaleX(0.9485);">Создать</div>
<div class="t" style="left:137px;top:121.50px;font-size:9.5px;line-height:10.61px;color:#a6a6a6;font-weight:400;transform:scaleX(1.0296);">запрос</div>
<div class="t" style="left:217px;top:108.70px;font-size:9.5px;line-height:10.61px;color:#a6a6a6;font-weight:400;transform:scaleX(1.0287);">Обновить</div>
<div class="t" style="left:228.75px;top:121.50px;font-size:9.5px;line-height:10.61px;color:#a6a6a6;font-weight:400;transform:scaleX(1.0177);">все</div>
<div class="t" style="left:217.5px;top:137.20px;font-size:9.5px;line-height:10.61px;color:#444444;font-weight:400;transform:scaleX(0.9899);">Подключения</div>
<div class="t" style="left:313.75px;top:108.70px;font-size:9.5px;line-height:10.61px;color:#a6a6a6;font-weight:400;transform:scaleX(1.0069);">Сортировка</div>
<div class="t" style="left:378.75px;top:108.70px;font-size:9.5px;line-height:10.61px;color:#a6a6a6;font-weight:400;transform:scaleX(1.0181);">Фильтр</div>
<div class="t" style="left:314.5px;top:137.20px;font-size:9.5px;line-height:10.61px;color:#444444;font-weight:400;transform:scaleX(0.9975);">Сортировка и фильтр</div>
<div class="t" style="left:450.5px;top:108.70px;font-size:9.5px;line-height:10.61px;color:#a6a6a6;font-weight:400;transform:scaleX(0.9869);">Текст по</div>
<div class="t" style="left:446px;top:121.50px;font-size:9.5px;line-height:10.61px;color:#a6a6a6;font-weight:400;transform:scaleX(1.0399);">столбцам</div>
<div class="t" style="left:452.5px;top:137.20px;font-size:9.5px;line-height:10.61px;color:#444444;font-weight:400;transform:scaleX(0.9524);">Работа с данными</div>
<div class="t" style="left:553.75px;top:108.70px;font-size:9.5px;line-height:10.61px;color:#a6a6a6;font-weight:400;transform:scaleX(1.0131);">Анализ &quot;что</div>
<div class="t" style="left:565px;top:121.50px;font-size:9.5px;line-height:10.61px;color:#a6a6a6;font-weight:400;transform:scaleX(1.0303);">если&quot;</div>
<div class="t" style="left:622px;top:108.70px;font-size:9.5px;line-height:10.61px;color:#a6a6a6;font-weight:400;transform:scaleX(1.0166);">Лист</div>
<div class="t" style="left:612px;top:121.50px;font-size:9.5px;line-height:10.61px;color:#a6a6a6;font-weight:400;transform:scaleX(1.0318);">прогноза</div>
<div class="t" style="left:584.25px;top:137.20px;font-size:9.5px;line-height:10.61px;color:#444444;font-weight:400;transform:scaleX(1.0381);">Прогноз</div>
<div class="t" style="left:668.25px;top:107.30px;font-size:9.5px;line-height:10.61px;color:#333333;font-weight:400;transform:scaleX(0.9927);">Структура</div>
<div class="t" style="left:33.75px;top:163.40px;font-size:10.5px;line-height:11.73px;color:#404040;font-weight:400;transform:scaleX(0.9860);">D2</div>
<div class="t" style="left:236.8px;top:162.69px;font-size:10.4px;line-height:11.62px;color:#1e1e1e;font-weight:700;transform:scaleX(1.0040);-webkit-text-stroke:0.1px currentColor;">=ПСТР(A1;ПОИСК<span style="color:#e0245e">(</span>" ";A1<span style="color:#e0245e">)</span>+1;ПОИСК<span style="color:#e0245e">(</span>" ";A1;ПОИСК<span style="color:#8b3fc9">(</span>" ";A1<span style="color:#8b3fc9">)</span>+1<span style="color:#e0245e">)</span>-ПОИСК<span style="color:#e0245e">(</span>" ";A1<span style="color:#e0245e">)</span>-1)</div>
<div class="t" style="left:132.25px;top:188.95px;font-size:10px;line-height:11.17px;color:#444444;font-weight:400;transform:scaleX(1.0492);">A</div>
<div class="t" style="left:267.75px;top:188.95px;font-size:10px;line-height:11.17px;color:#444444;font-weight:400;transform:scaleX(1.0492);">B</div>
<div class="t" style="left:367.75px;top:188.95px;font-size:10px;line-height:11.17px;color:#444444;font-weight:400;transform:scaleX(0.9676);">C</div>
<div class="t" style="left:470.25px;top:188.95px;font-size:10px;line-height:11.17px;color:#217346;font-weight:400;transform:scaleX(0.9676);">D</div>
<div class="t" style="left:563.5px;top:188.95px;font-size:10px;line-height:11.17px;color:#444444;font-weight:400;transform:scaleX(1.0492);">E</div>
<div class="t" style="left:634.5px;top:188.95px;font-size:10px;line-height:11.17px;color:#444444;font-weight:400;transform:scaleX(1.1458);">F</div>
<div class="t" style="left:686.0px;top:188.95px;font-size:10px;line-height:11.17px;color:#444444;font-weight:400;transform:scaleX(0.8996);">G</div>
<div class="t" style="left:32.0px;top:206.20px;font-size:10.5px;line-height:11.73px;color:#444444;font-weight:400;transform:scaleX(1.0267);">1</div>
<div class="t" style="left:32.0px;top:222.40px;font-size:10.5px;line-height:11.73px;color:#217346;font-weight:400;transform:scaleX(1.0267);">2</div>
<div class="t" style="left:32.0px;top:238.60px;font-size:10.5px;line-height:11.73px;color:#444444;font-weight:400;transform:scaleX(1.0267);">3</div>
<div class="t" style="left:32.0px;top:254.80px;font-size:10.5px;line-height:11.73px;color:#444444;font-weight:400;transform:scaleX(1.0267);">4</div>
<div class="t" style="left:32.0px;top:271.00px;font-size:10.5px;line-height:11.73px;color:#444444;font-weight:400;transform:scaleX(1.0267);">5</div>
<div class="t" style="left:32.0px;top:287.20px;font-size:10.5px;line-height:11.73px;color:#444444;font-weight:400;transform:scaleX(1.0267);">6</div>
<div class="t" style="left:32.0px;top:303.40px;font-size:10.5px;line-height:11.73px;color:#444444;font-weight:400;transform:scaleX(1.0267);">7</div>
<div class="t" style="left:32.0px;top:319.60px;font-size:10.5px;line-height:11.73px;color:#444444;font-weight:400;transform:scaleX(1.0267);">8</div>
<div class="t" style="left:32.0px;top:335.80px;font-size:10.5px;line-height:11.73px;color:#444444;font-weight:400;transform:scaleX(1.0267);">9</div>
<div class="t" style="left:29.5px;top:352.00px;font-size:10.5px;line-height:11.73px;color:#444444;font-weight:400;transform:scaleX(0.9412);">10</div>
<div class="t" style="left:29.5px;top:368.20px;font-size:10.5px;line-height:11.73px;color:#444444;font-weight:400;transform:scaleX(1.0086);">11</div>
<div class="t" style="left:29.5px;top:384.40px;font-size:10.5px;line-height:11.73px;color:#444444;font-weight:400;transform:scaleX(0.9412);">12</div>
<div class="t" style="left:29.5px;top:400.60px;font-size:10.5px;line-height:11.73px;color:#444444;font-weight:400;transform:scaleX(0.9412);">13</div>
<div class="t" style="left:29.5px;top:416.80px;font-size:10.5px;line-height:11.73px;color:#444444;font-weight:400;transform:scaleX(0.9412);">14</div>
<div class="t" style="left:29.5px;top:433.00px;font-size:10.5px;line-height:11.73px;color:#444444;font-weight:400;transform:scaleX(0.9412);">15</div>
<div class="t" style="left:29.5px;top:449.20px;font-size:10.5px;line-height:11.73px;color:#444444;font-weight:400;transform:scaleX(0.9412);">16</div>
<div class="t" style="left:29.5px;top:465.40px;font-size:10.5px;line-height:11.73px;color:#444444;font-weight:400;transform:scaleX(0.9412);">17</div>
<div class="t" style="left:29.5px;top:481.60px;font-size:10.5px;line-height:11.73px;color:#444444;font-weight:400;transform:scaleX(0.9412);">18</div>
<div class="t" style="left:29.5px;top:497.80px;font-size:10.5px;line-height:11.73px;color:#444444;font-weight:400;transform:scaleX(0.9412);">19</div>
<div class="t" style="left:29.5px;top:514.00px;font-size:10.5px;line-height:11.73px;color:#444444;font-weight:400;transform:scaleX(0.9412);">20</div>
<div class="t" style="left:29.5px;top:530.20px;font-size:10.5px;line-height:11.73px;color:#444444;font-weight:400;transform:scaleX(0.9412);">21</div>
<div class="t" style="left:29.5px;top:546.40px;font-size:10.5px;line-height:11.73px;color:#444444;font-weight:400;transform:scaleX(0.9412);">22</div>
<div class="t" style="left:29.5px;top:562.60px;font-size:10.5px;line-height:11.73px;color:#444444;font-weight:400;transform:scaleX(0.9412);">23</div>
<div class="t" style="left:29.5px;top:578.80px;font-size:10.5px;line-height:11.73px;color:#444444;font-weight:400;transform:scaleX(0.9412);">24</div>
<div class="t" style="left:29.5px;top:595.00px;font-size:10.5px;line-height:11.73px;color:#444444;font-weight:400;transform:scaleX(0.9412);">25</div>
<div class="t" style="left:29.5px;top:611.20px;font-size:10.5px;line-height:11.73px;color:#444444;font-weight:400;transform:scaleX(0.9412);clip-path:inset(0 0 9px 0);">26</div>
<div class="t" style="left:47.6px;top:205.23px;font-size:10.8px;line-height:12.06px;color:#1a1a1a;font-weight:400;transform:scaleX(1.0062);-webkit-text-stroke:0.2px currentColor;">Иванов Иван Иванович</div>
<div class="t" style="left:47.6px;top:221.43px;font-size:10.8px;line-height:12.06px;color:#1a1a1a;font-weight:400;transform:scaleX(1.0087);-webkit-text-stroke:0.2px currentColor;">Сергеев Сергей Сергеевич</div>
<div class="t" style="left:47.6px;top:237.63px;font-size:10.8px;line-height:12.06px;color:#1a1a1a;font-weight:400;transform:scaleX(1.0293);-webkit-text-stroke:0.2px currentColor;">Михайлов Михаил Михайлович</div>
<div class="t" style="left:47.6px;top:253.83px;font-size:10.8px;line-height:12.06px;color:#1a1a1a;font-weight:400;transform:scaleX(0.9915);-webkit-text-stroke:0.2px currentColor;">Сидоров Сидор Сидорович</div>
<div class="t" style="left:318.75px;top:205.23px;font-size:10.8px;line-height:12.06px;color:#1a1a1a;font-weight:400;transform:scaleX(1.0085);-webkit-text-stroke:0.2px currentColor;">Фамилия</div>
<div class="t" style="left:318.75px;top:221.43px;font-size:10.8px;line-height:12.06px;color:#1a1a1a;font-weight:400;transform:scaleX(1.0110);-webkit-text-stroke:0.2px currentColor;">Иванов</div>
<div class="t" style="left:318.75px;top:237.63px;font-size:10.8px;line-height:12.06px;color:#1a1a1a;font-weight:400;transform:scaleX(0.9996);-webkit-text-stroke:0.2px currentColor;">Сергеев</div>
<div class="t" style="left:318.75px;top:253.83px;font-size:10.8px;line-height:12.06px;color:#1a1a1a;font-weight:400;transform:scaleX(0.8960);-webkit-text-stroke:0.2px currentColor;">Михайлов</div>
<div class="t" style="left:427.2px;top:205.23px;font-size:10.8px;line-height:12.06px;color:#1a1a1a;font-weight:400;transform:scaleX(0.9890);-webkit-text-stroke:0.2px currentColor;">Имя</div>
<div class="t" style="left:427.5px;top:221.43px;font-size:10.8px;line-height:12.06px;color:#1a1a1a;font-weight:400;transform:scaleX(1.0085);-webkit-text-stroke:0.2px currentColor;">ИСК(&quot; &quot;;A1)-1)</div>
<div class="t" style="left:525.5px;top:205.23px;font-size:10.8px;line-height:12.06px;color:#1a1a1a;font-weight:400;transform:scaleX(0.9907);-webkit-text-stroke:0.2px currentColor;">Отчество</div>
<div class="t" style="left:115px;top:619.40px;font-size:10.5px;line-height:11.73px;color:#217346;font-weight:700;transform:scaleX(0.9378);"><span style="display:inline-block;transform:skewX(-9deg)">Лист1</span></div>
<div class="t" style="left:31.25px;top:640.80px;font-size:9.5px;line-height:10.61px;color:#444444;font-weight:400;transform:scaleX(0.9581);">Правка</div>
<div class="t" style="left:703.75px;top:641.30px;font-size:9.5px;line-height:10.61px;color:#9a9a9a;font-weight:400;transform:scaleX(0.8631);">100 %</div>
<div class="t" style="left:156.1px;top:266.55px;font-size:10px;line-height:11.17px;color:#a3a3a3;font-weight:400;transform:scaleX(0.9808);z-index:21;-webkit-text-stroke:0.2px currentColor;">Аргументы функции</div>
<div class="t" style="left:563.5px;top:266.35px;font-size:10px;line-height:11.17px;color:#8a8a8a;font-weight:400;transform:scaleX(0.9888);z-index:21;-webkit-text-stroke:0.2px currentColor;">?</div>
<div class="t" style="left:159.6px;top:290.10px;font-size:9.5px;line-height:10.61px;color:#1e1e1e;font-weight:700;transform:scaleX(0.8205);z-index:21;-webkit-text-stroke:0.2px currentColor;">ПСТР</div>
<div class="t" style="left:247.5px;top:309.20px;font-size:9.5px;line-height:10.61px;color:#1e1e1e;font-weight:700;transform:scaleX(0.8734);z-index:21;-webkit-text-stroke:0.2px currentColor;">Текст</div>
<div class="t" style="left:181px;top:327.90px;font-size:9.5px;line-height:10.61px;color:#1e1e1e;font-weight:700;transform:scaleX(0.9253);z-index:21;-webkit-text-stroke:0.2px currentColor;">Начальная_позиция</div>
<div class="t" style="left:184.5px;top:346.30px;font-size:9.5px;line-height:10.61px;color:#1e1e1e;font-weight:700;transform:scaleX(0.9172);z-index:21;-webkit-text-stroke:0.2px currentColor;">Количество_знаков</div>
<div class="t" style="left:280.6px;top:309.77px;font-size:9.2px;line-height:10.28px;color:#1e1e1e;font-weight:400;transform:scaleX(0.8356);z-index:21;-webkit-text-stroke:0.2px currentColor;">A1</div>
<div class="t" style="left:280.6px;top:328.37px;font-size:9.2px;line-height:10.28px;color:#1e1e1e;font-weight:400;transform:scaleX(0.9386);z-index:21;-webkit-text-stroke:0.2px currentColor;">ПОИСК(&quot; &quot;;A1)+1</div>
<div class="t" style="left:273.5px;top:346.87px;font-size:9.2px;line-height:10.28px;color:#1e1e1e;font-weight:400;transform:scaleX(1.0068);z-index:21;-webkit-text-stroke:0.2px currentColor;clip-path:inset(0 0 0 5px);">ОИСК(&quot; &quot;;A1)+</div>
<div class="t" style="left:336px;top:346.87px;font-size:9.2px;line-height:10.28px;color:#1e1e1e;font-weight:400;transform:scaleX(0.9228);z-index:21;-webkit-text-stroke:0.2px currentColor;">1)-ПОИСК(&quot; &quot;;A1)-1</div>
<div class="t" style="left:440.7px;top:309.60px;font-size:9.5px;line-height:10.61px;color:#1e1e1e;font-weight:400;transform:scaleX(0.7730);z-index:21;-webkit-text-stroke:0.2px currentColor;">=</div>
<div class="t" style="left:440.7px;top:327.90px;font-size:9.5px;line-height:10.61px;color:#1e1e1e;font-weight:400;transform:scaleX(0.7730);z-index:21;-webkit-text-stroke:0.2px currentColor;">=</div>
<div class="t" style="left:440.7px;top:346.30px;font-size:9.5px;line-height:10.61px;color:#1e1e1e;font-weight:400;transform:scaleX(0.7730);z-index:21;-webkit-text-stroke:0.2px currentColor;">=</div>
<div class="t" style="left:440.7px;top:368.30px;font-size:9.5px;line-height:10.61px;color:#1e1e1e;font-weight:400;transform:scaleX(0.7730);z-index:21;-webkit-text-stroke:0.2px currentColor;">=</div>
<div class="t" style="left:453.8px;top:309.60px;font-size:9.5px;line-height:10.61px;color:#1e1e1e;font-weight:400;transform:scaleX(0.9905);z-index:21;-webkit-text-stroke:0.2px currentColor;">&quot;Иванов Иван Иванович&quot;</div>
<div class="t" style="left:453.8px;top:327.90px;font-size:9.5px;line-height:10.61px;color:#1e1e1e;font-weight:400;transform:scaleX(0.8118);z-index:21;-webkit-text-stroke:0.2px currentColor;">8</div>
<div class="t" style="left:453.8px;top:346.30px;font-size:9.5px;line-height:10.61px;color:#1e1e1e;font-weight:400;transform:scaleX(0.8496);z-index:21;-webkit-text-stroke:0.2px currentColor;">4</div>
<div class="t" style="left:453.8px;top:368.30px;font-size:9.5px;line-height:10.61px;color:#1e1e1e;font-weight:400;transform:scaleX(0.9708);z-index:21;-webkit-text-stroke:0.2px currentColor;">&quot;Иван&quot;</div>
<div class="t" style="left:154.75px;top:381.30px;font-size:9.5px;line-height:10.61px;color:#1e1e1e;font-weight:400;transform:scaleX(0.9867);z-index:21;-webkit-text-stroke:0.2px currentColor;">Возвращает заданное число знаков из строки текста, начиная с указанной позиции.</div>
<div class="t" style="left:228.75px;top:400.80px;font-size:9.5px;line-height:10.61px;color:#1e1e1e;font-weight:700;transform:scaleX(0.9226);z-index:21;-webkit-text-stroke:0.2px currentColor;">Количество_знаков</div>
<div class="t" style="left:322px;top:400.80px;font-size:9.5px;line-height:10.61px;color:#1e1e1e;font-weight:400;transform:scaleX(0.9833);z-index:21;-webkit-text-stroke:0.2px currentColor;">количество знаков, которое следует извлечь из текста.</div>
<div class="t" style="left:154.2px;top:451.80px;font-size:9.5px;line-height:10.61px;color:#1e1e1e;font-weight:400;transform:scaleX(0.9848);z-index:21;-webkit-text-stroke:0.2px currentColor;">Значение:</div>
<div class="t" style="left:205.8px;top:451.80px;font-size:9.5px;line-height:10.61px;color:#1e1e1e;font-weight:400;transform:scaleX(0.9725);z-index:21;-webkit-text-stroke:0.2px currentColor;">Иван</div>
<div class="t" style="left:154.2px;top:475.10px;font-size:9.5px;line-height:10.61px;color:#1a6fd0;font-weight:400;transform:scaleX(1.0025);z-index:21;-webkit-text-stroke:0.2px currentColor;">Справка по этой функции</div>
<div class="t" style="left:511.8px;top:473.70px;font-size:9.5px;line-height:10.61px;color:#1e1e1e;font-weight:400;transform:scaleX(0.8300);z-index:21;-webkit-text-stroke:0.2px currentColor;">OK</div>
<div class="t" style="left:568.9px;top:474.20px;font-size:9.5px;line-height:10.61px;color:#1e1e1e;font-weight:400;transform:scaleX(0.9474);z-index:21;-webkit-text-stroke:0.2px currentColor;">Отмена</div>
</body></html>
